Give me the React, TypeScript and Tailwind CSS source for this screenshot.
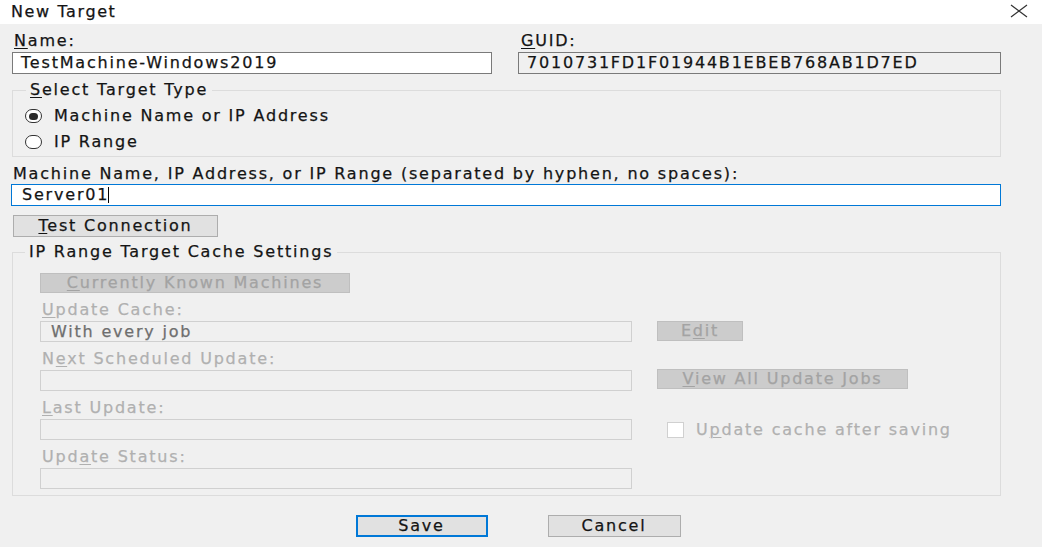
import React from "react";

const font = { fontFamily: '"DejaVu Sans", "Liberation Sans", sans-serif' };

function Mn({ children }: { children: React.ReactNode }) {
    return <span className="underline underline-offset-[2px] decoration-1">{children}</span>;
}

function Radio({ checked, children }: { checked?: boolean; children: React.ReactNode }) {
    return (
        <div className="flex items-center h-[26px] pl-[12px]">
            <span className="w-[17px] h-[14px] rounded-full border border-[#333333] bg-white flex items-center justify-center">
                {checked && <span className="w-[9px] h-[7px] rounded-full bg-[#2b2b2b]" />}
            </span>
            <span className="ml-[12px]">{children}</span>
        </div>
    );
}

function DisabledButton({ className, children }: { className: string; children: React.ReactNode }) {
    return (
        <div
            className={`h-[20px] bg-[#cccccc] border border-[#bfbfbf] text-[#a3a3a3] flex items-center justify-center ${className}`}
        >
            {children}
        </div>
    );
}

function DisabledBox({ children }: { children?: React.ReactNode }) {
    return (
        <div className="h-[21px] border border-[#d0d0d0] bg-[#f0f0f0] flex items-center pl-[10px] text-[#6e6e6e]">
            {children}
        </div>
    );
}

export default function App() {
    return (
        <div
            style={font}
            className="w-[1042px] h-[547px] bg-[#f0f0f0] text-[16px] tracking-[1.8px] text-[#141414] leading-[18px] overflow-hidden [-webkit-text-stroke:0.25px]"
        >
            {/* title bar */}
            <div className="h-[24px] bg-white flex items-center justify-between pl-[11px] pr-[14px]">
                <span className="tracking-[1.6px]">New Target</span>
                <svg width="18" height="14" viewBox="0 0 18 14" className="mb-[2px]">
                    <path d="M1 1 L17 13 M17 1 L1 13" stroke="#333" strokeWidth="1.2" fill="none" />
                </svg>
            </div>

            <div className="pl-[12px] pr-[41px] pt-[8px]">
                {/* name / guid */}
                <div className="flex gap-[26px]">
                    <div className="w-[480px]">
                        <div className="pl-[2px]">
                            <Mn>N</Mn>ame:
                        </div>
                        <div className="mt-[2px] h-[22px] bg-white border border-[#7a7a7a] flex items-center pl-[8px]">
                            TestMachine-Windows2019
                        </div>
                    </div>
                    <div className="flex-1">
                        <div className="pl-[3px]">
                            <Mn>G</Mn>UID:
                        </div>
                        <div className="mt-[2px] h-[22px] bg-[#f0f0f0] border border-[#7a7a7a] flex items-center pl-[8px]">
                            7010731FD1F01944B1EBEB768AB1D7ED
                        </div>
                    </div>
                </div>

                {/* target type */}
                <fieldset className="mt-[7px] border border-[#dcdcdc] pb-[1px] pt-[4px]">
                    <legend className="ml-[13px] px-[4px]">
                        <Mn>S</Mn>elect Target Type
                    </legend>
                    <Radio checked>Machine Name or IP Address</Radio>
                    <Radio>IP Range</Radio>
                </fieldset>

                <div className="mt-[8px] pl-[1px]">
                    Machine Name, IP Address, or IP Range (separated by hyphen, no spaces):
                </div>
                <div className="mt-[1px] -ml-[1px] h-[22px] bg-white border border-[#0078d7] flex items-center pl-[10px]">
                    Server01<span className="w-[1px] h-[16px] bg-black -ml-[1px]" />
                </div>

                <button className="mt-[9px] ml-[1px] w-[205px] h-[22px] bg-[#e1e1e1] border border-[#adadad] flex items-center justify-center">
                    <span>
                        <Mn>T</Mn>est Connection
                    </span>
                </button>

                {/* cache settings */}
                <fieldset className="mt-[6px] border border-[#dcdcdc] pb-[6px]">
                    <legend className="ml-[12px] px-[4px]">IP Range Target Cache Settings</legend>
                    <div className="pl-[27px] pr-[20px]">
                        <DisabledButton className="mt-[12px] w-[310px]">
                            <span>
                                <Mn>C</Mn>urrently Known Machines
                            </span>
                        </DisabledButton>

                        <div className="grid grid-cols-[592px_1fr] gap-x-[25px] text-[#b0b0b0]">
                            <div className="col-span-2 mt-[8px] pl-[2px]">
                                <Mn>U</Mn>pdate Cache:
                            </div>
                            <div className="mt-[2px]">
                                <DisabledBox>With every job</DisabledBox>
                            </div>
                            <div className="mt-[2px] flex items-center">
                                <DisabledButton className="w-[86px] -mt-[2px]">
                                    <span>
                                        E<Mn>d</Mn>it
                                    </span>
                                </DisabledButton>
                            </div>

                            <div className="col-span-2 mt-[8px] pl-[2px]">
                                N<Mn>e</Mn>xt Scheduled Update:
                            </div>
                            <div className="mt-[2px]">
                                <DisabledBox />
                            </div>
                            <div className="mt-[2px] flex items-center">
                                <DisabledButton className="w-[251px] -mt-[3px]">
                                    <span>
                                        <Mn>V</Mn>iew All Update Jobs
                                    </span>
                                </DisabledButton>
                            </div>

                            <div className="col-span-2 mt-[8px] pl-[2px]">
                                <Mn>L</Mn>ast Update:
                            </div>
                            <div className="mt-[2px]">
                                <DisabledBox />
                            </div>
                            <div className="mt-[2px] flex items-center pl-[10px]">
                                <span className="w-[17px] h-[16px] bg-white border border-[#d0d0d0]" />
                                <span className="ml-[12px]">
                                    U<Mn>p</Mn>date cache after saving
                                </span>
                            </div>

                            <div className="col-span-2 mt-[8px] pl-[2px]">
                                Upd<Mn>a</Mn>te Status:
                            </div>
                            <div className="mt-[2px]">
                                <DisabledBox />
                            </div>
                            <div />
                        </div>
                    </div>
                </fieldset>

                {/* actions */}
                <div className="mt-[19px] flex justify-center gap-[60px] pl-[23px]">
                    <button className="w-[132px] h-[22px] bg-[#e1e1e1] border-2 border-[#0078d7] flex items-center justify-center">
                        Save
                    </button>
                    <button className="w-[133px] h-[22px] bg-[#e1e1e1] border border-[#adadad] flex items-center justify-center">
                        Cancel
                    </button>
                </div>
            </div>
        </div>
    );
}
